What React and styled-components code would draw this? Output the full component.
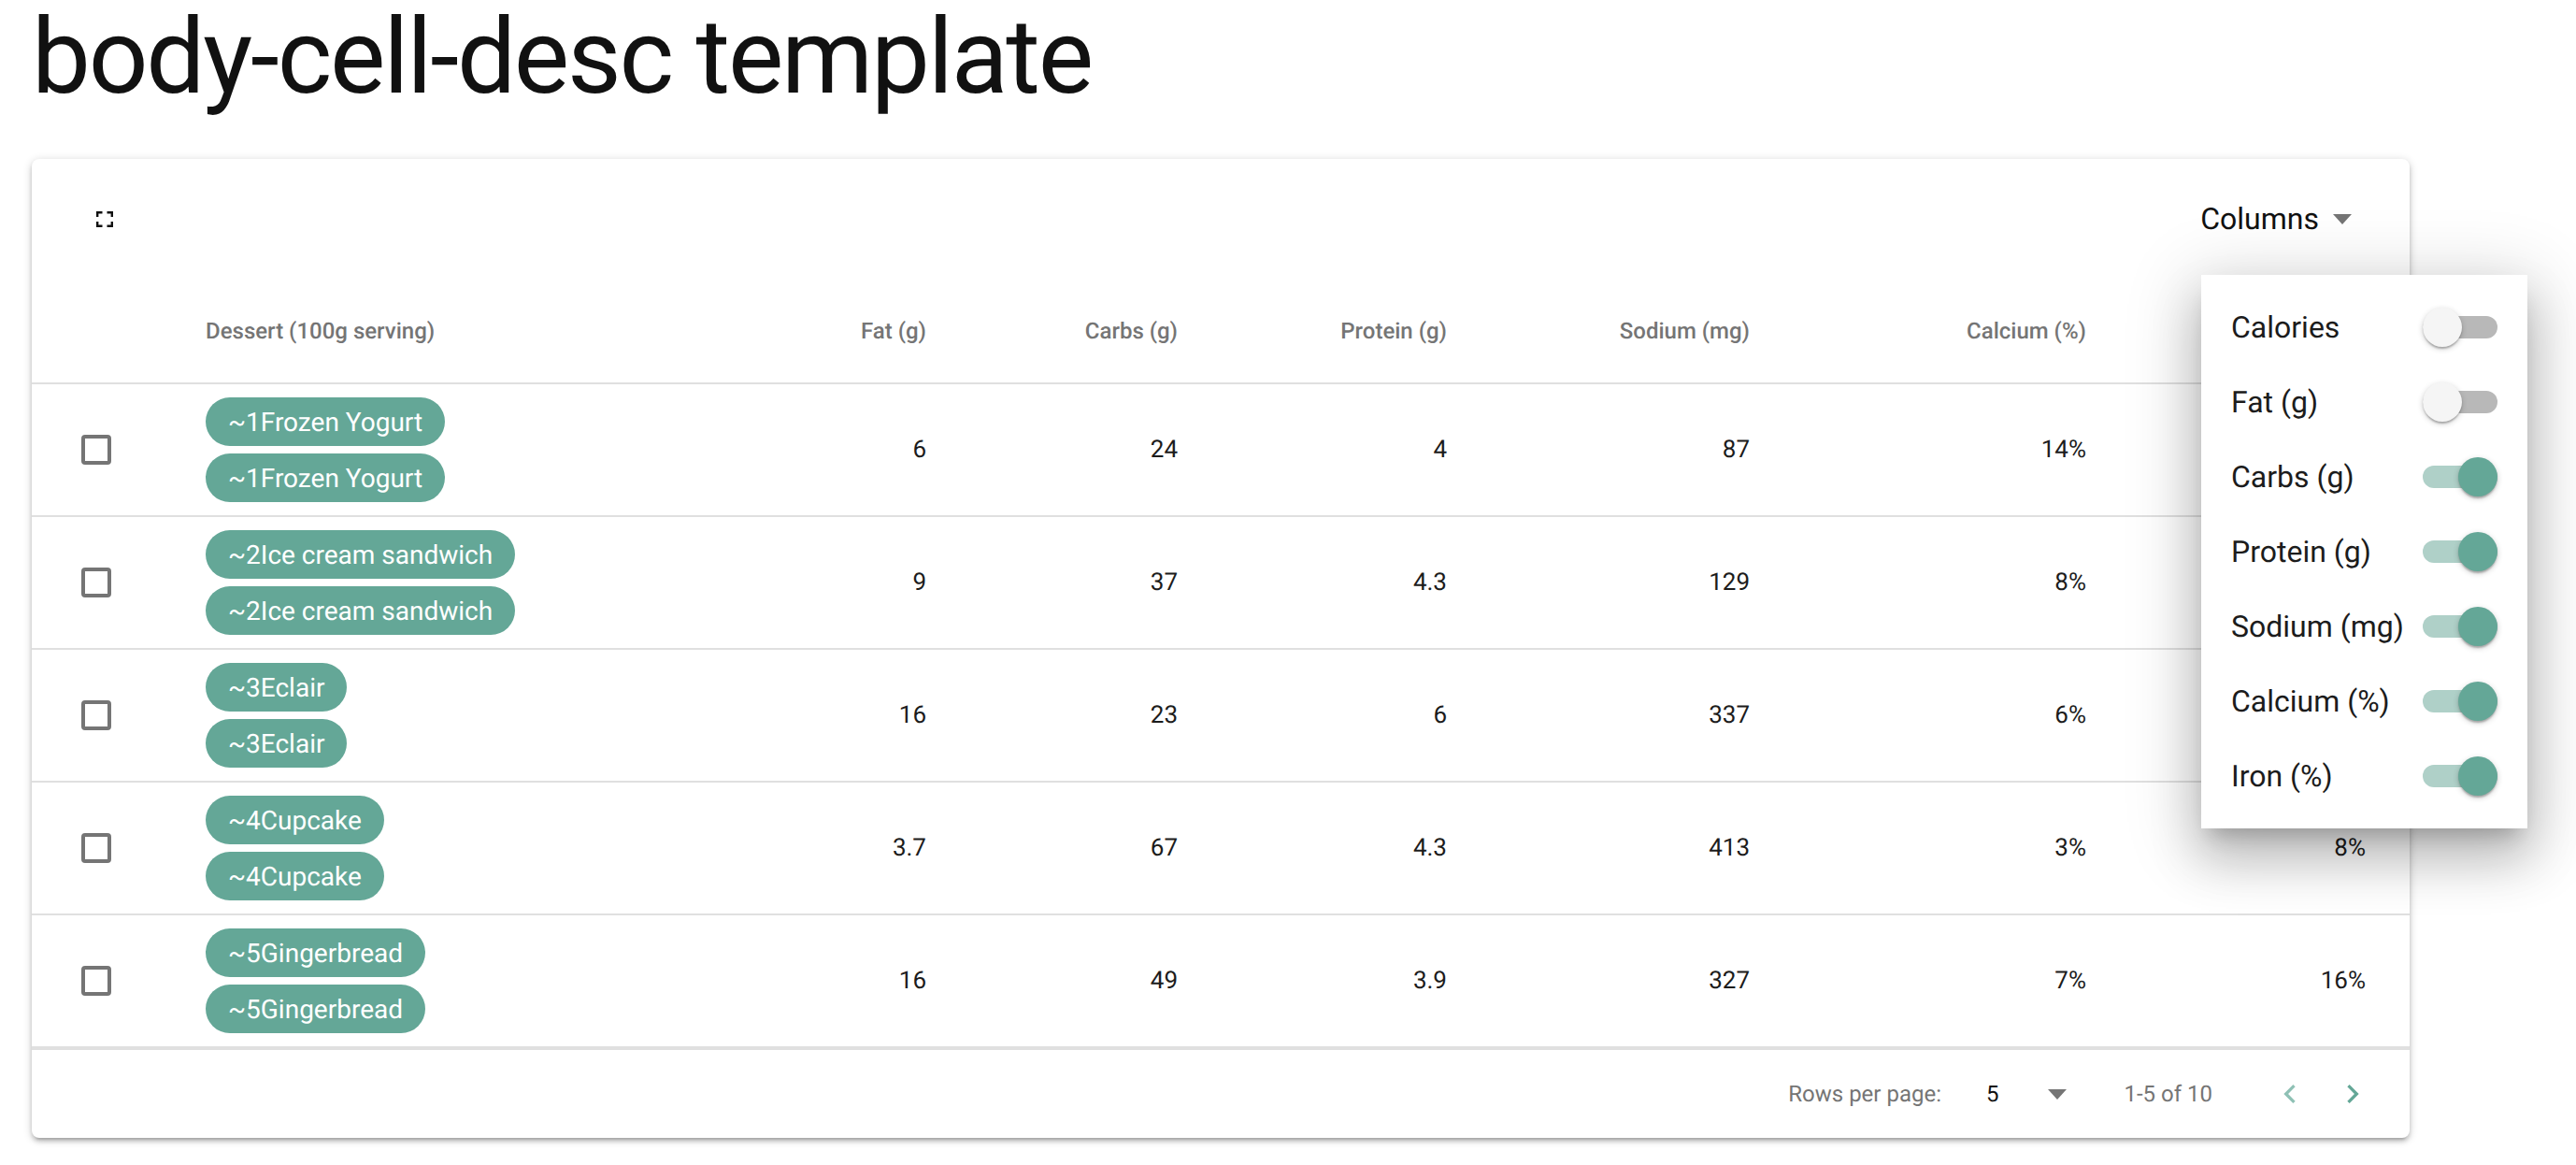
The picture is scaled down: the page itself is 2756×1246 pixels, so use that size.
import React from 'react';
import styled, { createGlobalStyle } from 'styled-components';

const TEAL = '#64a797';

const GlobalStyle = createGlobalStyle`
  html, body {
    margin: 0;
    padding: 0;
    background: #fff;
    font-family: Roboto, "Liberation Sans", sans-serif;
    text-rendering: geometricPrecision;
  }
`;

const Page = styled.div`
  padding: 0 34px;
  height: 1246px;
  overflow: hidden;
  box-sizing: border-box;
`;

const Title = styled.h1`
  margin: 0;
  height: 170px;
  font-size: 112px;
  line-height: 124px;
  letter-spacing: -0.02em;
  font-weight: 400;
  color: #111;
  white-space: nowrap;
`;

const Card = styled.div`
  position: relative;
  width: 2544px;
  height: 1047px;
  border-radius: 8px;
  background: #fff;
  box-shadow: 0 2px 10px rgba(0, 0, 0, 0.2), 0 4px 4px rgba(0, 0, 0, 0.14), 0 6px 2px -4px rgba(0, 0, 0, 0.12);
`;

const Toolbar = styled.div`
  height: 128px;
  display: flex;
  align-items: center;
  justify-content: space-between;
  padding: 0 62px 0 69px;
`;

const ColumnsButton = styled.div`
  display: flex;
  align-items: center;
  gap: 15px;
  font-size: 32px;
  color: #111;
`;

const Caret = styled.svg`
  display: block;
  width: 20px;
  height: 11px;
  fill: #757575;
`;

const Row = styled.div`
  display: grid;
  grid-template-columns: 186px 500px 271px 269px 288px 324px 360px 299px;
  align-items: center;
  height: ${({ $head }) => ($head ? '111px' : '140px')};
  border-bottom: 2px solid #e0e0e0;
`;

const HeadCell = styled.div`
  font-size: 24px;
  font-weight: 500;
  color: #757575;
  text-align: ${({ $left }) => ($left ? 'left' : 'right')};
  white-space: nowrap;
`;

const Cell = styled.div`
  font-size: 26px;
  color: #1c1c1c;
  text-align: right;
`;

const CheckCell = styled.div`
  padding-left: 53px;
`;

const Checkbox = styled.div`
  box-sizing: border-box;
  width: 32px;
  height: 32px;
  border: 4px solid #757575;
  border-radius: 4px;
`;

const ChipStack = styled.div`
  display: flex;
  flex-direction: column;
  align-items: flex-start;
  gap: 8px;
`;

const Chip = styled.div`
  height: 52px;
  line-height: 54px;
  padding: 0 24px;
  border-radius: 26px;
  background: ${TEAL};
  color: #fff;
  font-size: 28px;
  white-space: nowrap;
`;

const Footer = styled.div`
  display: flex;
  align-items: center;
  justify-content: flex-end;
  height: 94px;
  margin-top: 0;
  border-top: 2px solid #e0e0e0;
  padding-right: 41px;
  font-size: 24px;
  color: #757575;
`;

const RowsSelect = styled.div`
  display: flex;
  align-items: center;
  margin: 0 61px 0 48px;
  color: #111;
  gap: 53px;
`;

const PageNav = styled.div`
  display: flex;
  gap: 27px;
  margin-left: 63px;
`;

const Chevron = styled.svg`
  display: block;
  width: 40px;
  height: 40px;
  fill: ${({ $dim }) => ($dim ? '#8fc1b5' : TEAL)};
`;

const Popover = styled.div`
  position: absolute;
  top: 124px;
  right: -126px;
  box-sizing: border-box;
  width: 349px;
  padding: 16px 32px 16px 32px;
  background: #fff;
  box-shadow: 0 16px 20px -10px rgba(0, 0, 0, 0.2), 0 32px 48px 4px rgba(0, 0, 0, 0.17), 0 12px 70px 10px rgba(0, 0, 0, 0.16);
`;

const ToggleRow = styled.div`
  display: flex;
  align-items: center;
  justify-content: space-between;
  height: 80px;
  font-size: 32px;
  color: #1c1c1c;
`;

const Track = styled.div`
  display: flex;
  align-items: center;
  justify-content: ${({ $on }) => ($on ? 'flex-end' : 'flex-start')};
  width: 80px;
  height: 24px;
  border-radius: 12px;
  background: ${({ $on }) => ($on ? '#afd0c8' : '#b8b8b8')};
`;

const Thumb = styled.div`
  flex: none;
  width: 42px;
  height: 42px;
  border-radius: 50%;
  background: ${({ $on }) => ($on ? TEAL : '#f5f5f5')};
  box-shadow: 0 2px 6px rgba(0, 0, 0, 0.2), 0 2px 2px rgba(0, 0, 0, 0.14), 0 4px 2px -2px rgba(0, 0, 0, 0.12);
`;

const rows = [
  ['~1Frozen Yogurt', '6', '24', '4', '87', '14%', '1%'],
  ['~2Ice cream sandwich', '9', '37', '4.3', '129', '8%', '1%'],
  ['~3Eclair', '16', '23', '6', '337', '6%', '7%'],
  ['~4Cupcake', '3.7', '67', '4.3', '413', '3%', '8%'],
  ['~5Gingerbread', '16', '49', '3.9', '327', '7%', '16%'],
];

const heads = ['Fat (g)', 'Carbs (g)', 'Protein (g)', 'Sodium (mg)', 'Calcium (%)', 'Iron (%)'];

const toggles = [
  ['Calories', false],
  ['Fat (g)', false],
  ['Carbs (g)', true],
  ['Protein (g)', true],
  ['Sodium (mg)', true],
  ['Calcium (%)', true],
  ['Iron (%)', true],
];

const ArrowDrop = () => (
  <Caret viewBox="0 0 20 11">
    <path d="M0 0h20L10 11z" />
  </Caret>
);

const FullscreenIcon = () => (
  <svg width="18" height="17" viewBox="0 0 18 17" style={{ display: 'block' }}>
    <path d="M1.2 6V1.2H6.5M11.5 1.2h5.3V6M1.2 11v4.8H6.5M11.5 15.8h5.3V11" fill="none" stroke="#111" strokeWidth="2.4" />
  </svg>
);

export default function App() {
  return (
    <Page>
      <GlobalStyle />
      <Title>body-cell-desc template</Title>
      <Card>
        <Toolbar>
          <FullscreenIcon />
          <ColumnsButton>
            Columns
            <ArrowDrop />
          </ColumnsButton>
        </Toolbar>
        <Row $head>
          <div />
          <HeadCell $left>Dessert (100g serving)</HeadCell>
          {heads.map((h) => (
            <HeadCell key={h}>{h}</HeadCell>
          ))}
        </Row>
        {rows.map(([name, ...values]) => (
          <Row key={name}>
            <CheckCell>
              <Checkbox />
            </CheckCell>
            <ChipStack>
              <Chip>{name}</Chip>
              <Chip>{name}</Chip>
            </ChipStack>
            {values.map((v, i) => (
              <Cell key={i}>{v}</Cell>
            ))}
          </Row>
        ))}
        <Footer>
          Rows per page:
          <RowsSelect>
            5
            <ArrowDrop />
          </RowsSelect>
          1-5 of 10
          <PageNav>
            <Chevron $dim viewBox="0 0 24 24">
              <path d="M15.41 16.59L10.83 12l4.58-4.59L14 6l-6 6 6 6z" />
            </Chevron>
            <Chevron viewBox="0 0 24 24">
              <path d="M8.59 16.59L13.17 12 8.59 7.41 10 6l6 6-6 6z" />
            </Chevron>
          </PageNav>
        </Footer>
        <Popover>
          {toggles.map(([label, on]) => (
            <ToggleRow key={label}>
              {label}
              <Track $on={on}>
                <Thumb $on={on} />
              </Track>
            </ToggleRow>
          ))}
        </Popover>
      </Card>
    </Page>
  );
}
